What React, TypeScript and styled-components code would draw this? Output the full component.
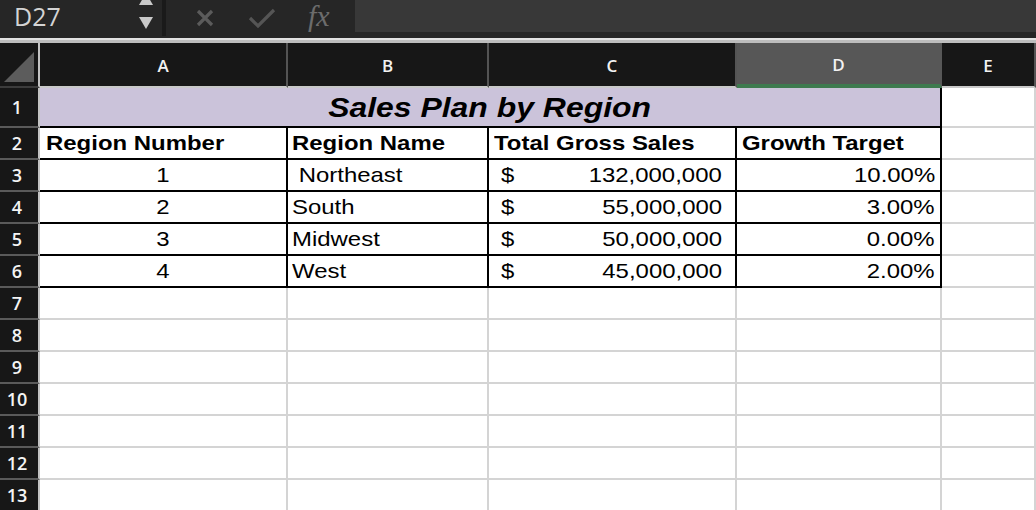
import styled, { createGlobalStyle } from 'styled-components';

const GlobalStyle = createGlobalStyle`
    body {
        margin: 0;
        background: #ffffff;
        overflow: hidden;
    }
`;

// cell text in the sheet is a bit wider than plain Arial
const STRETCH = 1.14;

type Align = 'left' | 'center' | 'right';

type RowData = {
    num: string;
    name: string;
    sales: string;
    growth: string;
};

const rows: RowData[] = [
    { num: '1', name: ' Northeast', sales: '132,000,000', growth: '10.00%' },
    { num: '2', name: 'South', sales: '55,000,000', growth: '3.00%' },
    { num: '3', name: 'Midwest', sales: '50,000,000', growth: '0.00%' },
    { num: '4', name: 'West', sales: '45,000,000', growth: '2.00%' },
];

const columns = ['A', 'B', 'C', 'D', 'E'];
const emptyRows = [7, 8, 9, 10, 11, 12, 13];

const Page = styled.div`
    width: 1036px;
    height: 510px;
    overflow: hidden;
    display: flex;
    flex-direction: column;
    background: #ffffff;
`;

/* ---------- formula bar ---------- */

const Toolbar = styled.div`
    display: flex;
    height: 38px;
    background: #262626;
    flex-shrink: 0;
`;

const NameBox = styled.div`
    width: 162px;
    height: 36px;
    display: flex;
    align-items: center;
    justify-content: space-between;
    padding: 0 8px 4px 14px;
    box-sizing: border-box;
    color: #d4d4d4;
    font-family: 'Open Sans', sans-serif;
    font-size: 25px;
    line-height: 1;
`;

const Divider = styled.div`
    width: 4px;
    height: 36px;
    background: #1a1a1a;
`;

const Actions = styled.div`
    width: 189px;
    height: 36px;
    display: flex;
    align-items: center;
    padding-left: 29px;
    gap: 33px;
    box-sizing: border-box;
`;

const Fx = styled.span`
    font-family: 'Liberation Serif', serif;
    font-style: italic;
    font-size: 30px;
    color: #6c6c6c;
    line-height: 30px;
    align-self: flex-start;
    margin-top: 1px;
    margin-left: -1px;
`;

const FormulaInput = styled.div`
    flex: 1;
    height: 32px;
    background: #383838;
`;

const Rule = styled.div`
    height: 3px;
    border-top: 2px solid #e2e2e2;
    background: #bdbdbd;
    flex-shrink: 0;
`;

/* ---------- sheet grid ---------- */

const Sheet = styled.div`
    display: grid;
    grid-template-columns: 40px 248px 201px 248px 205px 1fr;
    grid-template-rows: 45px 40px repeat(12, 32px);
    font-family: 'Liberation Sans', Arial, sans-serif;
    color: #000000;
`;

const Corner = styled.div`
    background: #171717;
    border-right: 2px solid #c3c3c3;
    border-bottom: 2px solid #3c3c3c;
    display: flex;
    align-items: flex-end;
    justify-content: flex-end;
    padding: 0 4px 4px 0;
`;

const ColHead = styled.div<{ $active?: boolean }>`
    background: ${p => (p.$active ? '#575757' : '#171717')};
    border-right: 2px solid ${p => (p.$active ? '#575757' : '#545454')};
    border-bottom: ${p => (p.$active ? '4px solid #3e7a4f' : '2px solid #c9c9c9')};
    display: flex;
    align-items: center;
    justify-content: center;
    color: #f2f2f2;
    font-family: 'Open Sans', sans-serif;
    font-weight: 600;
    font-size: 17px;
    padding-top: 2px;
`;

const RowHead = styled.div`
    background: #171717;
    border-right: 2px solid #c3c3c3;
    border-bottom: 2px solid #5a5a5a;
    display: flex;
    align-items: center;
    justify-content: center;
    padding-right: 4px;
    color: #f4f4f4;
    font-family: 'Open Sans', sans-serif;
    font-weight: 600;
    font-size: 18px;
`;

const Cell = styled.div<{ $align?: Align; $lined?: boolean; $bold?: boolean; $padL?: number; $padR?: number }>`
    display: flex;
    align-items: center;
    justify-content: ${p =>
        p.$align === 'center' ? 'center' : p.$align === 'right' ? 'flex-end' : 'flex-start'};
    border-right: 2px solid ${p => (p.$lined ? '#000000' : '#d4d4d4')};
    border-bottom: 2px solid ${p => (p.$lined ? '#000000' : '#d4d4d4')};
    padding-left: ${p => p.$padL ?? 4}px;
    padding-right: ${p => p.$padR ?? 5}px;
    font-size: 21px;
    font-weight: ${p => (p.$bold ? 700 : 400)};
    overflow: hidden;
    white-space: nowrap;
`;

const MoneyCell = styled(Cell)`
    justify-content: space-between;
`;

const TitleCell = styled.div`
    grid-column: 2 / 6;
    background: #cbc3da;
    border-right: 2px solid #000000;
    border-bottom: 2px solid #000000;
    display: flex;
    align-items: center;
    justify-content: center;
    font-size: 28px;
    font-weight: 700;
    font-style: italic;
    padding-top: 1px;
`;

const Txt = styled.span<{ $origin?: Align }>`
    display: inline-block;
    white-space: pre;
    transform: scaleX(${STRETCH});
    transform-origin: ${p => p.$origin ?? 'left'} center;
`;

const Spinner = () => (
    <svg width='16' height='36' viewBox='0 0 16 36'>
        <polygon points='1,7 15,7 8,-5' fill='#c9c9c9' />
        <polygon points='1,19 15,19 8,31' fill='#c9c9c9' />
    </svg>
);

const CrossIcon = () => (
    <svg width='20' height='18' viewBox='0 0 20 18'>
        <path d='M3 2 L17 16 M17 2 L3 16' stroke='#5b5b5b' strokeWidth='3.2' fill='none' />
    </svg>
);

const CheckIcon = () => (
    <svg width='28' height='22' viewBox='0 0 28 22'>
        <path d='M2 11 L10 19 L26 3' stroke='#555555' strokeWidth='3.2' fill='none' />
    </svg>
);

const CornerMark = () => (
    <svg width='30' height='30' viewBox='0 0 30 30'>
        <polygon points='0,30 30,30 30,0' fill='#5c5c5c' />
    </svg>
);

const App = () => {
    return (
        <Page>
            <GlobalStyle />
            <Toolbar>
                <NameBox>
                    <span>D27</span>
                    <Spinner />
                </NameBox>
                <Divider />
                <Actions>
                    <CrossIcon />
                    <CheckIcon />
                    <Fx>fx</Fx>
                </Actions>
                <FormulaInput />
            </Toolbar>
            <Rule />
            <Sheet>
                <Corner>
                    <CornerMark />
                </Corner>
                {columns.map(c => (
                    <ColHead key={c} $active={c === 'D'}>{c}</ColHead>
                ))}

                <RowHead>1</RowHead>
                <TitleCell>
                    <Txt $origin='center'>Sales Plan by Region</Txt>
                </TitleCell>
                <Cell />

                <RowHead>2</RowHead>
                <Cell $lined $bold $padL={6}><Txt>Region Number</Txt></Cell>
                <Cell $lined $bold><Txt>Region Name</Txt></Cell>
                <Cell $lined $bold $padL={5}><Txt>Total Gross Sales</Txt></Cell>
                <Cell $lined $bold $padL={5}><Txt>Growth Target</Txt></Cell>
                <Cell />

                {rows.map((r, i) => (
                    <>
                        <RowHead key={'h' + i}>{i + 3}</RowHead>
                        <Cell key={'a' + i} $lined $align='center'>
                            <Txt $origin='center'>{r.num}</Txt>
                        </Cell>
                        <Cell key={'b' + i} $lined><Txt>{r.name}</Txt></Cell>
                        <MoneyCell key={'c' + i} $lined $padL={12} $padR={13}>
                            <Txt>$</Txt>
                            <Txt $origin='right'>{r.sales}</Txt>
                        </MoneyCell>
                        <Cell key={'d' + i} $lined $align='right' $padR={5}>
                            <Txt $origin='right'>{r.growth}</Txt>
                        </Cell>
                        <Cell key={'e' + i} />
                    </>
                ))}

                {emptyRows.map(n => (
                    <>
                        <RowHead key={'rh' + n}>{n}</RowHead>
                        {columns.map(c => (
                            <Cell key={c + n} />
                        ))}
                    </>
                ))}
            </Sheet>
        </Page>
    );
};

export default App;
